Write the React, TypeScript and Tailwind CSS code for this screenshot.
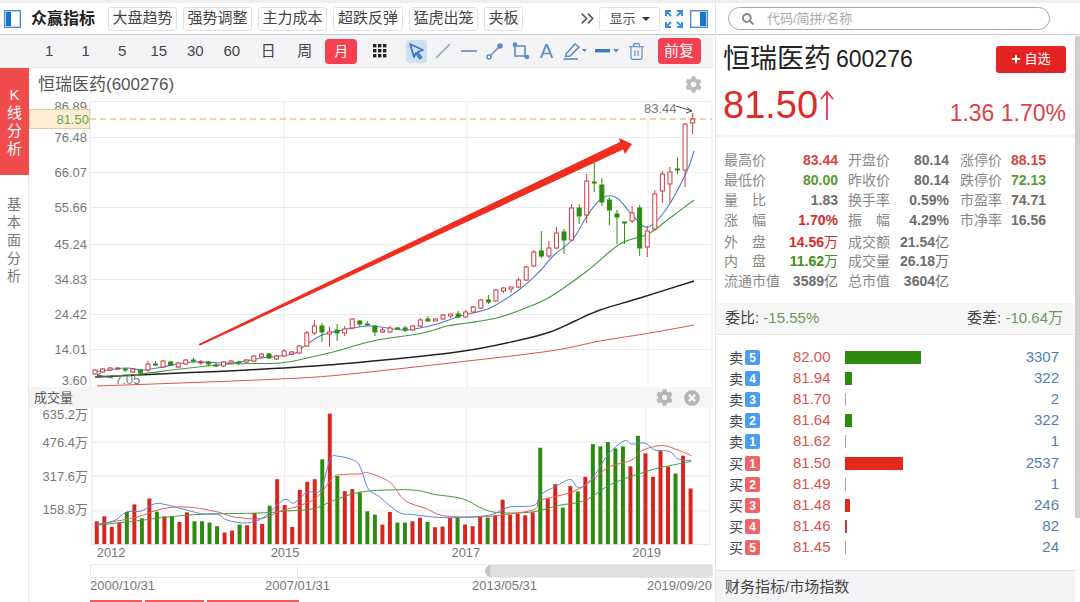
import React from "react";
import { FaCog, FaTimesCircle, FaSearch, FaPlus } from "react-icons/fa";
import { ChevronsRight, Trash2 } from "lucide-react";

const X = (i: number) => 95 + 7.565 * i;
const RED = "#d8261f";
const GREEN = "#2f8a10";

const volTopsZ: [number, "r" | "g"][] = [
  [423,"r"],[408,"r"],[440,"r"],[427,"r"],[395,"g"],[372,"r"],[414,"g"],[354,"r"],[394,"g"],[408,"r"],[408,"g"],[425,"r"],[396,"r"],[423,"g"],[423,"g"],[427,"g"],[438,"g"],[457,"r"],[451,"r"],[433,"g"],[435,"r"],[398,"r"],[431,"r"],[376,"g"],[296,"r"],[374,"r"],[440,"r"],[328,"r"],[304,"r"],[296,"r"],[236,"g"],[98,"r"],[286,"g"],[332,"r"],[326,"r"],
  [336,"g"],[393,"g"],[403,"g"],[433,"r"],[395,"r"],[427,"g"],[427,"g"],[423,"r"],[412,"r"],[425,"g"],[441,"r"],[439,"r"],[413,"r"],[410,"g"],[433,"r"],[438,"r"],[408,"r"],[412,"g"],[405,"r"],[358,"r"],[403,"r"],[400,"r"],[405,"r"],[396,"r"],[201,"g"],[354,"r"],[311,"r"],[382,"g"],[317,"r"],[333,"g"],[289,"r"],[190,"g"],[197,"g"],[184,"g"],[203,"g"],[197,"g"],[257,"r"],[165,"g"],[218,"r"],[289,"r"],[210,"r"],[258,"r"],[279,"g"],[225,"r"],[324,"r"],
];

// colour, body top, body bottom, wick top, wick bottom
const candles: [string, number, number, number, number][] = [
  ["r",369,373,368,374],["r",368,371,367,372],["r",367,369,366,370],["r",367,368,366,369],["g",368,369,367,371],["r",368,371,367,372],["g",369,372,368,374],["r",363,369,360,371],["g",363,364,360,365],["r",360,366,359,367],
  ["g",361,364,360,365],["r",362,366,361,367],["r",359,363,358,364],["g",359,360,357,362],["r",361,362,359,364],["g",361,363,360,365],["g",364,365,362,366],["r",361,365,360,366],["r",360,362,359,363],["g",361,361.5,360,364],
  ["r",359,361,358,362],["r",355,360,354,361],["r",353,356,352,357],["g",353,357,352,358],["r",355,358,354,359],["r",350,355,348,356],["r",351,353,350,354],["r",345,352,344,353],["r",332,345,330,346],["r",325,332,319,334],
  ["g",325,331,322,341],["r",331,333,326,346],["g",329,332,323,340],["r",328,332,325,335],["r",318,327,317,328],["g",320,323,319,326],["g",323,324,320,325],["g",325,331,324,335],["r",329,331,327,332],["r",327,331,325,332],
  ["g",327,328,326,329],["g",327,329,325,331],["r",325,329,324,330],["r",319,325,317,326],["g",318,320,315,320],["r",318,320,317,320],["r",314,318,313,319],["r",313,315,313,317],["g",313,316,310,317],["r",311,316,309,317],
  ["r",306,311,305,312],["r",299,307,298,308],["g",299,301,294,303],["r",289,300,288,301],["r",287,290,286,292],["r",286,288,286,292],["r",279,286,277,287],["r",266,279,265,280],["r",251,265,249,266],["g",250,255,230,257],
  ["r",247,255,240,257],["r",232,247,226,248],["g",231,239,228,253],["r",207,239,203,240],["g",207,215,203,223],["r",180,214,173,222],["g",181,182,162,191],["g",184,201,177,205],["g",199,209,197,224],["g",213,216,209,243],
  ["g",221,222,221,243],["r",212,220,205,222],["g",207,247,204,255],["r",230,246,225,256],["r",193,228,189,230],["r",173,190,170,202],["r",171,183,166,202],["g",168,169,156,173],["r",123,169,122,186],["r",118,122,112,133],
];

const pts = (a: number[][]) => {
  let d = `M${a[0][0]} ${a[0][1]}`;
  for (let i = 1; i < a.length; i++) {
    const p0 = a[Math.max(0, i - 2)], p1 = a[i - 1], p2 = a[i], p3 = a[Math.min(a.length - 1, i + 1)];
    const c1x = p1[0] + (p2[0] - p0[0]) / 6, c1y = p1[1] + (p2[1] - p0[1]) / 6;
    const c2x = p2[0] - (p3[0] - p1[0]) / 6, c2y = p2[1] - (p3[1] - p1[1]) / 6;
    d += ` C${c1x} ${c1y} ${c2x} ${c2y} ${p2[0]} ${p2[1]}`;
  }
  return d;
};
const z6 = (a: number[][]) => a.map(([x, y]) => [x / 3, 380 + y / 3]);
const z7 = (a: number[][]) => a.map(([x, y]) => [360 + x / 3, 380 + y / 3]);

const blueK = [[95,371],[125,367],[142,369],[157,367],[193,361],[232,362],[262,357],[293,353],[303,346],[320,335],[338,330],[367,325],[387,327],[407,329],[437,323],[460,315],[490,307],[520,288],[540,270],[553,255],[573,238],[587,215],[602,197],[617,197],[633,215],[648,226],[667,207],[687,170],[694,150]];
const greenK = [[95,376],[140,373],[180,368],[230,363],[280,362],[307,357],[337,350],[373,340],[423,332],[447,325],[467,322],[497,317],[523,308],[550,296],[587,270],[620,243],[648,233],[670,217],[694,199]];
const blackK = [[95,376],[180,372],[247,369],[340,363],[457,351],[520,339],[550,331],[575,320],[600,309],[640,297],[694,280]];
const redK = [[97,385],[180,382],[280,378],[340,374],[450,362],[550,350],[600,340],[650,332],[694,324]];

const blueV = [...z6([[285,435],[340,420],[375,395],[420,392],[460,370],[490,372],[530,382],[600,400],[650,402],[680,420],[740,428],[790,410],[850,358],[880,368],[920,335],[960,330],[990,235],[1015,227],[1060,238]]), ...z7([[0,258],[25,325],[60,350],[115,395],[160,403],[250,412],[340,410],[400,402],[450,380],[525,375],[545,343],[590,318],[635,297],[660,322],[700,295],[750,220],[798,180],[820,190],[860,187],[890,208],[935,212],[960,235],[1000,240]])];
const redV = [...z6([[285,432],[400,412],[480,386],[560,380],[650,395],[700,410],[780,415],[840,392],[900,375],[950,350],[1000,290],[1030,282]]), ...z7([[0,280],[25,277],[90,305],[135,360],[200,385],[250,406],[340,410],[420,405],[525,388],[545,360],[640,335],[700,300],[750,260],[820,238],[850,210],[910,194],[960,208],[1000,225]])];
const greenV = [...z6([[285,435],[420,420],[500,410],[600,402],[780,398],[860,392],[940,385],[1000,360]]), ...z7([[0,335],[100,328],[175,330],[225,342],[310,355],[370,385],[420,397],[520,395],[600,375],[680,360],[760,310],[880,268],[960,250],[1000,242]])];

const PriceChart = () => {
  const ys: [string, number][] = [["76.48",136],["66.07",171],["55.66",206],["45.24",243],["34.83",278],["24.42",313],["14.01",348],["3.60",379]];
  return (
    <svg viewBox="29 100 685 286" className="block w-[685px] h-[286px] overflow-visible">
      <line x1="90" y1="100" x2="90" y2="386" stroke="#e4e4ea" />
      <line x1="712" y1="100" x2="712" y2="386" stroke="#eeeef2" />
      {[284, 467, 648].map((x) => <line key={x} x1={x} y1="100" x2={x} y2="386" stroke="#ebebf0" />)}
      {[100, 136, 171, 206, 243, 278, 313, 348].map((y) => <line key={y} x1="90" y1={y + 0.5} x2="712" y2={y + 0.5} stroke="#ebebf0" />)}
      <text x="87" y="110" textAnchor="end" fontSize="13" fill="#777">86.89</text>
      {ys.map(([t, y]) => <text key={t} x="87" y={y + 5} textAnchor="end" fontSize="13" fill="#777">{t}</text>)}
      <rect x="29.5" y="108.5" width="60" height="19" fill="#fdeed3" stroke="#e6cc9a" />
      <text x="89" y="123" textAnchor="end" fontSize="13" fill="#5fa84a">81.50</text>
      <line x1="90" y1="118" x2="712" y2="118" stroke="#d9a860" strokeDasharray="6 4" />
      <path d={pts(redK)} fill="none" stroke="#d9534f" strokeWidth="1" />
      <path d={pts(blackK)} fill="none" stroke="#222" strokeWidth="1.4" />
      <path d={pts(greenK)} fill="none" stroke="#3f9a3a" strokeWidth="1.1" />
      <path d={pts(blueK)} fill="none" stroke="#4a7fc9" strokeWidth="1.1" />
      {candles.map(([c, t, b, h, l], i) => {
        const x = X(i);
        const col = c === "r" ? "#cf3a3f" : GREEN;
        return (
          <g key={i}>
            <line x1={x} y1={h} x2={x} y2={l} stroke={col} strokeWidth="1" />
            <rect x={x - 2} y={t} width="4" height={Math.max(b - t, 1)} fill={c === "r" ? "#fff" : GREEN} stroke={col} strokeWidth="1" />
          </g>
        );
      })}
      <polygon points="198.6,343 620,141 619,137 632,143 625,153 623,148.5 199.6,344.8" fill="#ef2e20" />
      <text x="644" y="112" fontSize="13" fill="#777">83.44</text>
      <path d="M676 105 L692 110 M687 106.5 L692 110 L686 112" fill="none" stroke="#555" strokeWidth="1" />
      <text x="115" y="383" fontSize="13" fill="#777">7.05</text>
      <path d="M113 377 L97 374 M101 372 L97 374 L101 377" fill="none" stroke="#555" strokeWidth="1" />
    </svg>
  );
};

const VolumeChart = () => (
  <svg viewBox="29 407 685 153" className="block w-[685px] h-[153px]">
    <line x1="90" y1="407" x2="90" y2="545" stroke="#e4e4ea" />
    <line x1="712" y1="407" x2="712" y2="545" stroke="#eeeef2" />
    {[284, 467, 648].map((x) => <line key={x} x1={x} y1="407" x2={x} y2="545" stroke="#ebebf0" />)}
    {[441, 475, 510, 544].map((y) => <line key={y} x1="90" y1={y + 0.5} x2="712" y2={y + 0.5} stroke="#e6e6ec" />)}
    {([["635.2万",418],["476.4万",446],["317.6万",480],["158.8万",514]] as [string, number][]).map(([t, y]) => (
      <text key={t} x="86" y={y} textAnchor="end" fontSize="13" fill="#777">{t}</text>
    ))}
    {volTopsZ.map(([z, c], i) => {
      const t = 380 + z / 3;
      return <rect key={i} x={X(i) - 2} y={t} width="4" height={544 - t} fill={c === "r" ? RED : GREEN} />;
    })}
    <path d={pts(greenV)} fill="none" stroke="#3f9a3a" strokeWidth="1" />
    <path d={pts(redV)} fill="none" stroke="#e0605a" strokeWidth="1" />
    <path d={pts(blueV)} fill="none" stroke="#5a86d6" strokeWidth="1" />
    {([["2012",95],["2015",270],["2017",452],["2019",634]] as [string, number][]).map(([t, x]) => (
      <text key={t} x={x} y="557" fontSize="13" fill="#777">{t}</text>
    ))}
  </svg>
);

const PanelIcon = () => (
  <svg width="17" height="18" viewBox="0 0 17 18">
    <rect x="0.7" y="0.7" width="15.6" height="16.6" fill="#fff" stroke="#4a8fd6" strokeWidth="1.4" />
    <rect x="2" y="2" width="5" height="14" fill="#1c74c8" />
  </svg>
);
const PanelIconR = () => (
  <svg width="18" height="18" viewBox="0 0 18 18">
    <rect x="0.7" y="0.7" width="16.6" height="16.6" fill="#fff" stroke="#4a8fd6" strokeWidth="1.4" />
    <rect x="10" y="2" width="6" height="14" fill="#1c74c8" />
  </svg>
);

const topButtons = [["大盘趋势", "w-[69px]"], ["强势调整", "w-[69px]"], ["主力成本", "w-[69px]"], ["超跌反弹", "w-[70px]"], ["猛虎出笼", "w-[69px]"], ["夹板", "w-[39px]"]];
const periods = ["1", "1", "5", "15", "30", "60", "日", "周"];
const TC = "#5b8ac4";

const Tool = ({ w, children, active }: { w: string; children: React.ReactNode; active?: boolean }) => (
  <div className={`${w} h-[24px] flex items-center justify-center shrink-0`}>
    <div className={`flex items-center justify-center h-[23px] w-[21px] rounded-[3px] ${active ? "bg-[#cfe0f2]" : ""}`}>{children}</div>
  </div>
);

const Label = ({ t }: { t: string }) =>
  t.includes(" ") ? (
    <span className="w-[42px] flex justify-between text-[#888]">
      {t.split(" ").map((c) => <span key={c}>{c}</span>)}
    </span>
  ) : (
    <span className="text-[#888] whitespace-nowrap">{t}</span>
  );

type Stat = [string, string, string];
const G = "text-[#5a9a30]", R = "text-[#d9443f]", N = "text-[#6e6e6e]";
const Unit = ({ v, u }: { v: string; u: string }) => <>{v}<span className="font-normal">{u}</span></>;

const statRows: { cells: (Stat | null)[]; mt?: string; h?: string }[] = [
  { cells: [["最高价", "83.44", R], ["开盘价", "80.14", N], ["涨停价", "88.15", R]], h: "h-[19px]" },
  { cells: [["最低价", "80.00", G], ["昨收价", "80.14", N], ["跌停价", "72.13", G]], h: "h-[20px]" },
  { cells: [["量 比", "1.83", N], ["换手率", "0.59%", N], ["市盈率", "74.71", N]], h: "h-[20px]" },
  { cells: [["涨 幅", "1.70%", "text-[#d92b2b]"], ["振 幅", "4.29%", N], ["市净率", "16.56", N]], h: "h-[20px]" },
  { cells: [["外 盘", "14.56|万", "text-[#d92b2b]"], ["成交额", "21.54|亿", N], null], mt: "mt-[2px]", h: "h-[20px]" },
  { cells: [["内 盘", "11.62|万", "text-[#3f8f1c]"], ["成交量", "26.18|万", N], null], h: "h-[19px]" },
  { cells: [["流通市值", "3589|亿", N], ["总市值", "3604|亿", N], null], h: "h-[20px]" },
];
const cellW = ["w-[114px]", "w-[101px]", "w-[86px]"];
const cellM = ["", "ml-[10px]", "ml-[11px]"];

const book: [string, string, string, number, string, number, string][] = [
  ["卖", "5", "82.00", 76, "3307", 0, GREEN],
  ["卖", "4", "81.94", 7, "322", 0, GREEN],
  ["卖", "3", "81.70", 1, "2", 0, "#aaa"],
  ["卖", "2", "81.64", 7, "322", 0, GREEN],
  ["卖", "1", "81.62", 1, "1", 0, "#aaa"],
  ["买", "1", "81.50", 58, "2537", 1, "#e3281c"],
  ["买", "2", "81.49", 1, "1", 0, "#c99"],
  ["买", "3", "81.48", 5, "246", 0, "#e3281c"],
  ["买", "4", "81.46", 2, "82", 0, "#c8373a"],
  ["买", "5", "81.45", 1, "24", 0, "#c99"],
];

export default function App() {
  return (
    <div className="w-[1080px] h-[602px] flex overflow-hidden bg-white font-['Liberation_Sans','Noto_Sans_CJK_SC',sans-serif] text-[#444]">
      {/* left */}
      <div className="w-[715px] h-full flex flex-col shrink-0">
        <div className="h-[35px] shrink-0 flex items-center bg-white border-t-[3px] border-[#efefef] border-b border-b-[#c9c9cd] pl-[4px]">
          <PanelIcon />
          <span className="ml-[10px] w-[66px] text-[16px] font-bold text-[#222] whitespace-nowrap">众赢指标</span>
          <div className="ml-[11px] flex gap-[6px]">
            {topButtons.map(([t, w]) => (
              <div key={t} className={`${w} h-[24px] flex items-center justify-center border border-[#e2e2e2] rounded-[3px] text-[15px] text-[#444] whitespace-nowrap`}>{t}</div>
            ))}
          </div>
          <ChevronsRight className="ml-[54px] text-[#555]" size={21} strokeWidth={1.9} />
          <div className="ml-[1px] w-[61px] h-[24px] flex items-center justify-center gap-[6px] border border-[#e2e2e2] rounded-[3px] text-[13px] text-[#555]">
            显示
            <span className="w-0 h-0 border-l-[4px] border-r-[4px] border-t-[4px] border-l-transparent border-r-transparent border-t-[#333]" />
          </div>
          <svg className="ml-[5px]" width="18" height="18" viewBox="0 0 18 18" fill="none" stroke="#3f8fd6" strokeWidth="2">
            <path d="M1 6V1H6M12 1H17V6M17 12V17H12M6 17H1V12M1.5 1.5L6 6M16.5 1.5L12 6M16.5 16.5L12 12M1.5 16.5L6 12" />
          </svg>
          <span className="ml-[7px] flex"><PanelIconR /></span>
        </div>
        <div className="h-[33px] shrink-0 flex items-center bg-[#f4f4f7] border-b border-[#eaeaee] pl-[31px] mr-[1px]">
          {periods.map((p, i) => (
            <div key={i} className="w-[36.5px] text-center text-[15px] text-[#444] shrink-0">{p}</div>
          ))}
          <div className="w-[36.5px] flex justify-center shrink-0">
            <div className="w-[32px] h-[25px] rounded-[4px] bg-[#f44050] text-white text-[14px] flex items-center justify-center">月</div>
          </div>
          <div className="w-[40px] flex justify-center shrink-0">
            <svg width="14" height="14" viewBox="0 0 14 14" fill="#222">
              {[0, 5, 10].flatMap((y) => [0, 5, 10].map((x) => <rect key={`${x}${y}`} x={x} y={y} width="3.4" height="3.4" />))}
            </svg>
          </div>
          <div className="w-[4px] shrink-0" />
          <Tool w="w-[26px]" active>
            <svg width="17" height="18" viewBox="0 0 17 18" fill="none" stroke="#3f78c0" strokeWidth="1.8" strokeLinejoin="round"><path d="M2 2L15 8L9.5 10L13.5 15.5L11.5 16.5L8 11L6 15Z" /></svg>
          </Tool>
          <Tool w="w-[26px]"><svg width="16" height="16" viewBox="0 0 16 16" stroke="#8aa6cc" strokeWidth="1.6"><path d="M1 15L15 1" /></svg></Tool>
          <Tool w="w-[26px]"><svg width="16" height="4" viewBox="0 0 16 4" stroke={TC} strokeWidth="1.6"><path d="M0 2H16" /></svg></Tool>
          <Tool w="w-[26px]"><svg width="17" height="17" viewBox="0 0 17 17" fill="none" stroke={TC} strokeWidth="1.5"><path d="M4 13L13 4" /><circle cx="3" cy="14" r="2" fill="#fff" /><circle cx="14" cy="3" r="2" fill={TC} /></svg></Tool>
          <Tool w="w-[26px]"><svg width="18" height="18" viewBox="0 0 18 18" fill="none" stroke={TC} strokeWidth="1.6"><path d="M3 2V14H15M1 4H13V16" /><circle cx="15" cy="15" r="1.5" fill={TC} /><circle cx="3" cy="2.5" r="1.5" fill={TC} /></svg></Tool>
          <Tool w="w-[26px]"><span className="text-[20px] text-[#5b8ac4] leading-none">A</span></Tool>
          <div className="w-[30px] flex items-center justify-center shrink-0">
            <svg width="24" height="18" viewBox="0 0 24 18" fill="none" stroke={TC} strokeWidth="1.5"><path d="M3 12L12 2L16 5L7 14L2.5 14.5Z" /><path d="M0.5 17H15" strokeWidth="1.6" /><path d="M19 7H24L21.5 10Z" fill={TC} stroke="none" /></svg>
          </div>
          <div className="w-[34px] flex items-center justify-center shrink-0">
            <svg width="24" height="6" viewBox="0 0 24 6"><rect x="0" y="1" width="15" height="3.4" fill="#3f78c0" /><path d="M18 1H24L21 4.5Z" fill={TC} /></svg>
          </div>
          <Tool w="w-[26px]"><Trash2 size={19} color={TC} strokeWidth={1.4} /></Tool>
          <div className="ml-[8px] w-[43px] h-[26px] rounded-[4px] bg-[#f44050] text-white text-[15px] flex items-center justify-center">前复</div>
        </div>
        <div className="flex-1 flex min-h-0">
          <div className="w-[29px] shrink-0 border-r border-[#ebebef] flex flex-col items-stretch">
            <div className="h-[107px] bg-[#f14c4c] text-white text-[15px] leading-[18px] flex flex-col items-center justify-center -mr-px">
              {["K", "线", "分", "析"].map((c) => <span key={c}>{c}</span>)}
            </div>
            <div className="mt-[20px] text-[#777] text-[14px] leading-[18px] flex flex-col items-center">
              {["基", "本", "面", "分", "析"].map((c) => <span key={c}>{c}</span>)}
            </div>
          </div>
          <div className="flex-1 min-w-0 flex flex-col">
            <div className="h-[33px] flex items-center justify-between pl-[9px] pr-[13px] shrink-0">
              <span className="text-[17px] text-[#555] whitespace-nowrap">恒瑞医药(600276)</span>
              <FaCog size={17} color="#bcbcbc" />
            </div>
            <PriceChart />
            <div className="h-[21px] shrink-0 bg-[#f5f5f5] mr-[2px] flex items-center justify-between pl-[5px] pr-[13px] text-[13px] text-[#555]">
              <span>成交量</span>
              <span className="flex items-center gap-[11px]">
                <FaCog size={17} color="#b5b5b5" />
                <FaTimesCircle size={16} color="#b5b5b5" />
              </span>
            </div>
            <VolumeChart />
            <div className="ml-[61px] mr-[2px] mt-[4px] h-[14px] shrink-0 border border-[#e8e8ec] rounded-[3px] flex">
              <div className="w-[207px] border-r border-[#e8e8ec]" />
              <div className="flex-1" />
              <div className="w-[227px] bg-[#dfdfe2] rounded-l-[6px] border-l-[5px] border-[#c4c4c8]" />
            </div>
            <div className="h-[16px] ml-[61px] mt-[0px] text-[13px] leading-[16px] text-[#777] shrink-0 flex whitespace-nowrap">
              <span className="w-[175px]">2000/10/31</span>
              <span className="w-[207px]">2007/01/31</span>
              <span className="w-[175px]">2013/05/31</span>
              <span>2019/09/20</span>
            </div>
            <div className="ml-[61px] mt-[6px] flex gap-[3px] h-[2px]">
              <div className="w-[52px] bg-[#f25a5a]" />
              <div className="w-[59px] bg-[#f25a5a]" />
              <div className="w-[92px] bg-[#f25a5a]" />
            </div>
          </div>
        </div>
      </div>
      {/* right */}
      <div className="flex-1 relative flex flex-col border-l border-[#e6e6e6] min-w-0">
        <div className="absolute right-0 top-[36px] w-[5px] h-[482px] bg-[#cfcfcf]" />
        <div className="h-[35px] shrink-0 flex items-center border-t-[3px] border-[#efefef] border-b border-b-[#c9c9cd] pl-[12px]">
          <div className="w-[322px] h-[23px] rounded-full border-[1.5px] border-[#a8a8a8] flex items-center pl-[13px] text-[13px] text-[#aaa] whitespace-nowrap">
            <FaSearch size={12} color="#8a8a8a" />
            <span className="ml-[13px]">代码/简拼/名称</span>
          </div>
        </div>
        <div className="h-[102px] shrink-0 border-b-2 border-[#f0f0f0] mr-[5px] pl-[7px] pr-[10px]">
          <div className="flex items-center justify-between h-[46px] pt-[2px]">
            <div className="flex items-center whitespace-nowrap text-[#222]">
              <span className="text-[27px] leading-none">恒瑞医药</span>
              <span className="ml-[5px] text-[23px] leading-none">600276</span>
            </div>
            <div className="w-[70px] h-[27px] bg-[#e52323] rounded-[3px] text-white text-[13px] flex items-center justify-center gap-[3px] mr-[-1px]">
              <FaPlus size={10} />自选
            </div>
          </div>
          <div className="flex items-end justify-between h-[46px]">
            <span className="flex items-center text-[38px] leading-[44px] text-[#dd2c26] whitespace-nowrap">
              81.50
              <svg className="ml-[1px]" width="16" height="30" viewBox="0 0 16 30" fill="none" stroke="#e8384f" strokeWidth="1.8"><path d="M8 30V2M2 9L8 2L14 9" /></svg>
            </span>
            <span className="text-[23px] leading-[30px] text-[#e0404a] whitespace-nowrap mr-[-1px] mb-[-1px]">1.36 1.70%</span>
          </div>
        </div>
        <div className="shrink-0 pt-[14px] pl-[8px] h-[166px] text-[14px]">
          {statRows.map((row, ri) => (
            <div key={ri} className={`flex ${row.h} items-center ${row.mt ?? ""}`}>
              {row.cells.map((c, i) =>
                c ? (
                  <div key={i} className={`${cellW[i]} ${cellM[i]} flex justify-between items-center shrink-0`}>
                    <Label t={c[0]} />
                    <span className={`font-bold ${c[2]} whitespace-nowrap`}>
                      {c[1].includes("|") ? <Unit v={c[1].split("|")[0]} u={c[1].split("|")[1]} /> : c[1]}
                    </span>
                  </div>
                ) : null
              )}
            </div>
          ))}
        </div>
        <div className="h-[32px] shrink-0 mr-[5px] bg-[#f6f6f6] border-b border-[#e6e6e6] flex items-center justify-between pl-[9px] pr-[12px] text-[15px] text-[#444]">
          <span>委比: <span className="text-[#6a9a5a]">-15.55%</span></span>
          <span>委差: <span className="text-[#6a9a5a]">-10.64万</span></span>
        </div>
        <div className="pt-[12px] shrink-0 pl-[13px]">
          {book.map(([s, n, p, w, v, gap, col], i) => (
            <div key={i} className={`flex items-center h-[21px] ${gap ? "mt-[1px]" : ""}`}>
              <span className="w-[15px] text-[14px] text-[#444] leading-none">{s}</span>
              <span className={`ml-[1px] w-[15px] h-[15px] rounded-[2px] text-white text-[12px] font-bold flex items-center justify-center ${s === "卖" ? "bg-[#4a9cf0]" : "bg-[#ef6464]"}`}>{n}</span>
              <span className="ml-[33px] w-[38px] text-[15px] text-[#d9534f]">{p}</span>
              <div className="ml-[14px] w-[176px] h-[13px] flex">
                <div className="h-full" style={{ width: w, background: col }} />
              </div>
              <span className="w-[38px] text-right text-[15px] text-[#5580b0]">{v}</span>
            </div>
          ))}
        </div>
        <div className="mt-[12px] flex-1 mr-[5px] bg-[#f4f4f6] border-t border-[#dcdcdc] pl-[9px] pt-[5px] text-[15px] text-[#444]">财务指标/市场指数</div>
      </div>
    </div>
  );
}
